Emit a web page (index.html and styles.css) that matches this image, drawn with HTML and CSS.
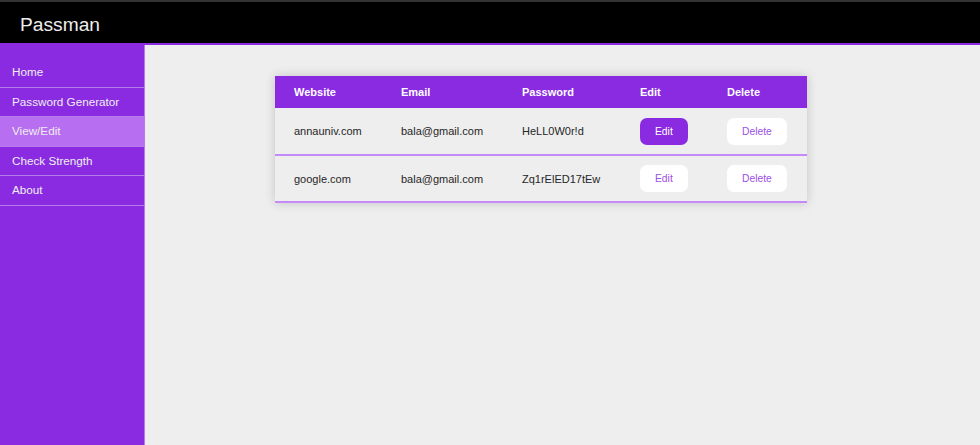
FILE: index.html
```html
<!DOCTYPE html>
<html>
<head>
<meta charset="utf-8">
<title>Passman</title>
<link rel="stylesheet" href="styles.css">
</head>
<body>
<header class="topbar"><h1 class="brand">Passman</h1></header>
<div class="layout">
  <nav class="sidebar">
    <a class="nav-item" href="#">Home</a>
    <a class="nav-item" href="#">Password Generator</a>
    <a class="nav-item active" href="#">View/Edit</a>
    <a class="nav-item" href="#">Check Strength</a>
    <a class="nav-item" href="#">About</a>
  </nav>
  <main class="content">
    <table class="pw-table">
      <thead>
        <tr>
          <th class="c-site">Website</th>
          <th class="c-mail">Email</th>
          <th class="c-pass">Password</th>
          <th class="c-edit">Edit</th>
          <th class="c-del">Delete</th>
        </tr>
      </thead>
      <tbody>
        <tr>
          <td>annauniv.com</td>
          <td>bala@gmail.com</td>
          <td>HeLL0W0r!d</td>
          <td><button class="btn btn-solid">Edit</button></td>
          <td><button class="btn btn-light">Delete</button></td>
        </tr>
        <tr>
          <td>google.com</td>
          <td>bala@gmail.com</td>
          <td>Zq1rElED17tEw</td>
          <td><button class="btn btn-light">Edit</button></td>
          <td><button class="btn btn-light">Delete</button></td>
        </tr>
      </tbody>
    </table>
  </main>
</div>
</body>
</html>
```
FILE: styles.css
```css
* { box-sizing: border-box; }
html, body { margin: 0; padding: 0; height: 100%; }
body {
  font-family: "Liberation Sans", Arial, sans-serif;
  background: #eeeeee;
  display: flex;
  flex-direction: column;
  height: 445px;
  overflow: hidden;
}
.topbar {
  background: #000;
  border-top: 2px solid #333;
  border-bottom: 2px solid #8a2be2;
  height: 45px;
  display: flex;
  align-items: center;
  padding-left: 20px;
  flex: none;
}
.brand {
  margin: 0;
  font-weight: normal;
  font-size: 19.2px;
  color: #eeeeee;
  position: relative;
  top: 2px;
}
.layout {
  flex: 1;
  display: flex;
  min-height: 0;
}
.sidebar {
  width: 145px;
  background: #8a2be2;
  border-right: 1px solid #b778f0;
  padding-top: 13px;
  display: flex;
  flex-direction: column;
  flex: none;
}
.nav-item {
  display: block;
  height: 29.5px;
  line-height: 28.5px;
  padding-left: 12px;
  color: #eee;
  text-decoration: none;
  font-size: 11.7px;
  border-bottom: 1px solid #b67cec;
}
.nav-item.active {
  background: #b86ef0;
}
.content {
  flex: 1;
  padding-top: 31px;
  padding-left: 130px;
}
.pw-table {
  border-collapse: collapse;
  width: 532px;
  box-shadow: 0 0 10px rgba(0,0,0,0.18);
  font-size: 11px;
}
.pw-table th {
  background: #8a2be2;
  color: #fff;
  font-weight: bold;
  text-align: left;
  height: 32px;
  padding: 0 0 0 19px;
}
.c-site { width: 107px; }
.c-mail { width: 121px; }
.c-pass { width: 118px; }
.c-edit { width: 87px; }
.c-del { width: 99px; }
.pw-table td {
  background: #eeeeee;
  color: #262626;
  height: 47px;
  padding: 0 0 0 19px;
  border-bottom: 2px solid #c58af9;
}
.btn {
  display: block;
  font-family: "Liberation Sans", Arial, sans-serif;
  font-size: 10.3px;
  height: 27px;
  padding: 0 15px;
  border-radius: 7px;
  border: none;
  cursor: pointer;
}
.btn-solid {
  background: #8a2be2;
  color: #fff;
}
.btn-light {
  background: #fff;
  color: #9b4fe6;
}
```
